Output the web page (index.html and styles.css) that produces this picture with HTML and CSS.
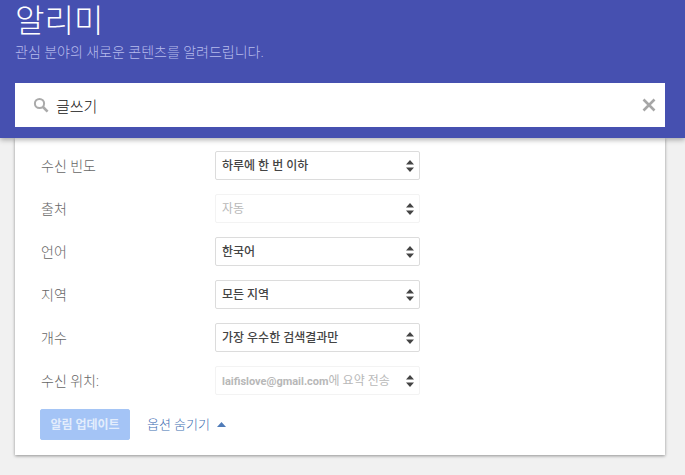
FILE: index.html
```html
<!DOCTYPE html>
<html lang="ko">
<head>
<meta charset="utf-8">
<title>알리미</title>
<link rel="stylesheet" href="styles.css">
</head>
<body>
<header class="header">
  <h1 class="title">알리미</h1>
  <p class="subtitle">관심 분야의 새로운 콘텐츠를 알려드립니다.</p>
  <div class="search">
    <svg class="search-icon" width="16" height="16" viewBox="0 0 16 16"><circle cx="6.500" cy="6.500" r="4.600" fill="none" stroke="#aaa" stroke-width="2"/><path d="M10 10l4.600 4.600" stroke="#aaa" stroke-width="2.600"/></svg>
    <span class="query">글쓰기</span>
    <svg class="clear-icon" width="14" height="14" viewBox="0 0 14 14"><path d="M1.500 1.500l11 11M12.500 1.500l-11 11" stroke="#a6a6a6" stroke-width="2.600"/></svg>
  </div>
</header>
<main class="card">
  <div class="row">
    <span class="label">수신 빈도</span>
    <div class="select"><span>하루에 한 번 이하</span><svg class="updown" width="8" height="14" viewBox="0 0 8 14"><path d="M4 1l4 4.500H0zM4 13L0 8.500h8z" fill="#444"/></svg></div>
  </div>
  <div class="row">
    <span class="label">출처</span>
    <div class="select disabled"><span>자동</span><svg class="updown" width="8" height="14" viewBox="0 0 8 14"><path d="M4 1l4 4.500H0zM4 13L0 8.500h8z" fill="#444"/></svg></div>
  </div>
  <div class="row">
    <span class="label">언어</span>
    <div class="select"><span>한국어</span><svg class="updown" width="8" height="14" viewBox="0 0 8 14"><path d="M4 1l4 4.500H0zM4 13L0 8.500h8z" fill="#444"/></svg></div>
  </div>
  <div class="row">
    <span class="label">지역</span>
    <div class="select"><span>모든 지역</span><svg class="updown" width="8" height="14" viewBox="0 0 8 14"><path d="M4 1l4 4.500H0zM4 13L0 8.500h8z" fill="#444"/></svg></div>
  </div>
  <div class="row">
    <span class="label">개수</span>
    <div class="select"><span>가장 우수한 검색결과만</span><svg class="updown" width="8" height="14" viewBox="0 0 8 14"><path d="M4 1l4 4.500H0zM4 13L0 8.500h8z" fill="#444"/></svg></div>
  </div>
  <div class="row">
    <span class="label">수신 위치:</span>
    <div class="select disabled"><span><span class="latin">laifislove@gmail.com</span>에 요약 전송</span><svg class="updown" width="8" height="14" viewBox="0 0 8 14"><path d="M4 1l4 4.500H0zM4 13L0 8.500h8z" fill="#444"/></svg></div>
  </div>
  <div class="actions">
    <button class="update" type="button">알림 업데이트</button>
    <a class="toggle" href="#">옵션 숨기기</a>
    <svg class="caret" width="9" height="5" viewBox="0 0 9 5"><path d="M4.500 0L9 5H0z" fill="#4f7bb8"/></svg>
  </div>
</main>
</body>
</html>
```

FILE: styles.css
```css
* { box-sizing: border-box; }
html, body { margin: 0; height: 100%; overflow: hidden; }
body {
  background: #f1f1f1;
  font-family: Roboto, "Noto Sans CJK KR", sans-serif;
}
.header {
  position: relative;
  z-index: 2;
  height: 138px;
  padding: 0 20px 0 15px;
  background: #4650b0;
  box-shadow: 0 2px 5px rgba(0, 0, 0, .3);
}
.title {
  margin: 0;
  padding: 3px 0 0;
  height: 42px;
  font-size: 32px;
  line-height: 36px;
  font-weight: 300;
  color: #fff;
}
.subtitle {
  margin: 0;
  height: 41px;
  font-size: 14px;
  line-height: 20px;
  font-weight: 300;
  color: #b6bbec;
}
.search {
  display: flex;
  align-items: center;
  height: 44px;
  padding: 0 9px 0 18px;
  background: #fff;
}
.query {
  flex: 1;
  margin-left: 7px;
  font-size: 15px;
  font-weight: 300;
  color: #111;
}
.card {
  width: 650px;
  height: 317px;
  margin-left: 15px;
  padding: 13px 25px 0;
  background: #fff;
  box-shadow: 0 1px 3px rgba(0, 0, 0, .4);
}
.row {
  display: flex;
  align-items: center;
  height: 29px;
  margin-bottom: 14px;
}
.label {
  width: 175px;
  padding: 0 0 1px 1px;
  font-size: 14px;
  font-weight: 300;
  color: #666;
}
.select {
  display: flex;
  align-items: center;
  justify-content: space-between;
  width: 205px;
  height: 29px;
  padding: 0 5px 2px 6px;
  background: #fff;
  border: 1px solid #dcdcdc;
  border-radius: 2px;
  font-size: 12px;
  font-weight: 500;
  color: #444;
}
.select.disabled {
  border-color: #f3f3f3;
  font-weight: 400;
  color: #b8b8b8;
}
.updown { margin-top: 2px; }
.latin {
  font-size: 11px;
  font-weight: 700;
}
.actions {
  display: flex;
  align-items: center;
  height: 31px;
  margin-top: 1px;
}
.update {
  width: 90px;
  height: 31px;
  padding: 0 0 2px;
  border: 1px solid #a5c5f5;
  border-radius: 2px;
  background: #a4c4f6;
  color: #e3edfc;
  font: 700 12px Roboto, "Noto Sans CJK KR", sans-serif;
}
.toggle {
  margin-left: 17px;
  padding-bottom: 2px;
  font-size: 13px;
  font-weight: 300;
  color: #3f6fb2;
  text-decoration: none;
}
.caret { margin-left: 7px; }
```
